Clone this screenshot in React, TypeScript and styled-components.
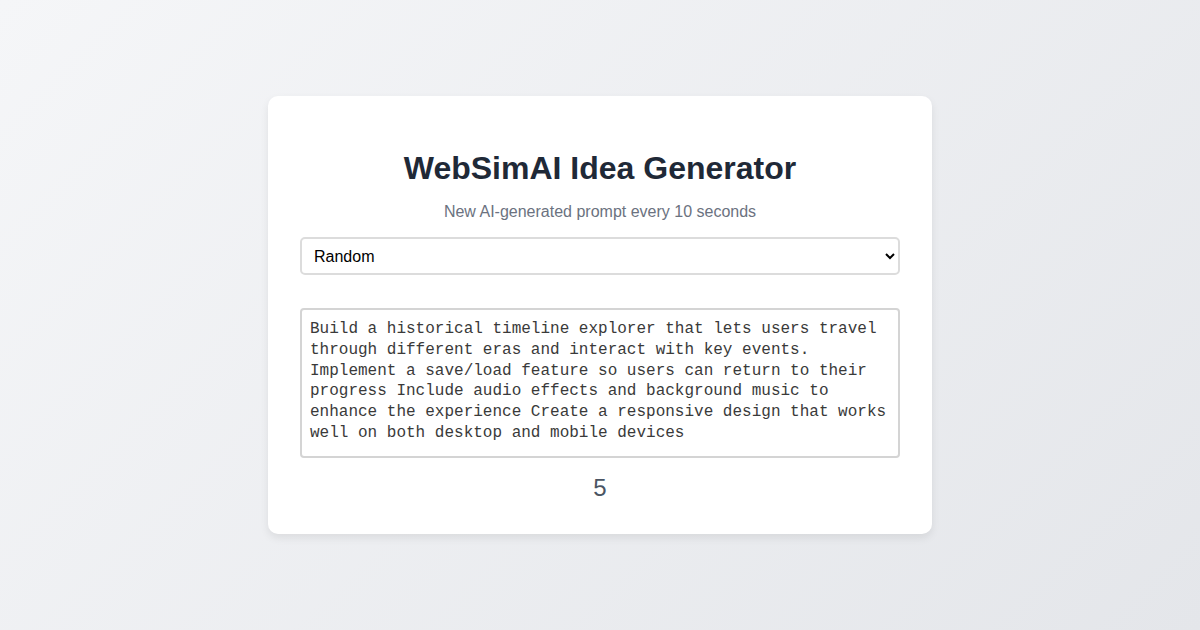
import styled, { createGlobalStyle } from 'styled-components';

const GlobalStyle = createGlobalStyle`
  html, body {
    margin: 0;
    padding: 0;
  }
  body {
    font-family: "Liberation Sans", Arial, sans-serif;
    background: linear-gradient(135deg, #f5f6f8 0%, #e4e6ea 100%);
    min-height: 630px;
  }
`;

const Page = styled.div`
  min-height: 630px;
  display: flex;
  align-items: center;
  justify-content: center;
`;

const Card = styled.div`
  width: 664px;
  height: 438px;
  box-sizing: border-box;
  padding: 32px;
  background: #ffffff;
  border-radius: 10px;
  box-shadow: 0 4px 8px rgba(0, 0, 0, 0.08);
  display: flex;
  flex-direction: column;
  align-items: stretch;
`;

const Title = styled.h1`
  margin: 22px 0 0;
  font-size: 32px;
  font-weight: 700;
  color: #1f2937;
  text-align: center;
`;

const Subtitle = styled.p`
  margin: 16px 0 0;
  font-size: 16px;
  color: #6b7280;
  text-align: center;
`;

const Select = styled.select`
  margin-top: 16px;
  width: 100%;
  height: 38px;
  padding: 0 8px;
  font-family: "Liberation Sans", Arial, sans-serif;
  font-size: 16px;
  color: #000;
  background: #fff;
  border: 2px solid #dcdcdc;
  border-radius: 5px;
`;

const Prompt = styled.div`
  margin-top: 33px;
  box-sizing: border-box;
  height: 150px;
  padding: 9px 8px 8px;
  border: 2px solid #d4d4d4;
  border-radius: 4px;
  font-family: "Liberation Mono", "Courier New", monospace;
  font-size: 16px;
  line-height: 20.8px;
  color: #3a3a3a;
`;

const Countdown = styled.div`
  margin-top: 16px;
  font-size: 24px;
  color: #4b5563;
  text-align: center;
`;

const categories = ['Random', 'Games', 'Tools', 'Education', 'Art', 'Social'];

export default function App() {
  return (
    <>
      <GlobalStyle />
      <Page>
        <Card>
          <Title>WebSimAI Idea Generator</Title>
          <Subtitle>New AI-generated prompt every 10 seconds</Subtitle>
          <Select defaultValue="Random">
            {categories.map((c) => (
              <option key={c} value={c}>
                {c}
              </option>
            ))}
          </Select>
          <Prompt>
            Build a historical timeline explorer that lets users travel through different eras and
            interact with key events. Implement a save/load feature so users can return to their
            progress Include audio effects and background music to enhance the experience Create a
            responsive design that works well on both desktop and mobile devices
          </Prompt>
          <Countdown>5</Countdown>
        </Card>
      </Page>
    </>
  );
}
